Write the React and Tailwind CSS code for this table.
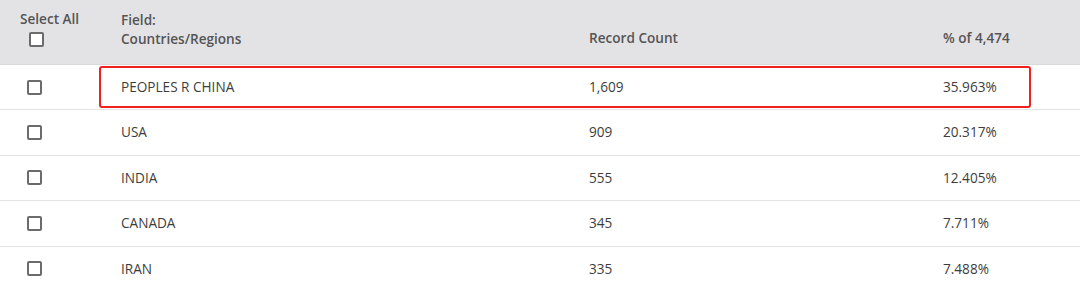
const rows = [
  { name: 'PEOPLES R CHINA', count: '1,609', pct: '35.963%', marked: true },
  { name: 'USA', count: '909', pct: '20.317%' },
  { name: 'INDIA', count: '555', pct: '12.405%' },
  { name: 'CANADA', count: '345', pct: '7.711%' },
  { name: 'IRAN', count: '335', pct: '7.488%' },
];

function Box() {
  return <span className="block h-[15px] w-[15px] rounded-[2px] border-2 border-[#6b6b6b] bg-white" />;
}

export default function App() {
  return (
    <div className="h-[287px] w-[1080px] overflow-hidden bg-white text-[13.6px] text-[#3d3d3d]" style={{ fontFamily: '"Source Sans Pro", "Open Sans", "Liberation Sans", sans-serif' }}>
      <div className="grid h-[65px] grid-cols-[99px_468px_354px_1fr] border-b border-[#d9d9dc] bg-[#e3e3e6] font-semibold text-[#555]">
        <div className="flex flex-col items-start pl-[20px] pt-[10px]">
          <span className="leading-[18px]">Select All</span>
          <span className="ml-[9px] mt-[4px]"><Box /></span>
        </div>
        <div className="flex flex-col pl-[22px] pt-[10px] leading-[19px]">
          <span>Field:</span>
          <span>Countries/Regions</span>
        </div>
        <div className="flex items-end pb-[16px] pl-[22px]">Record Count</div>
        <div className="flex items-end pb-[16px] pl-[22px]">% of 4,474</div>
      </div>
      {rows.map((r) => (
        <div key={r.name} className="relative grid h-[45.4px] grid-cols-[99px_468px_354px_1fr] items-center border-b border-[#e4e4e4]">
          <div className="pl-[27px]"><Box /></div>
          <div className="pl-[22px]">{r.name}</div>
          <div className="pl-[22px]">{r.count}</div>
          <div className="pl-[22px]">{r.pct}</div>
          {r.marked && (
            <div className="pointer-events-none absolute left-[99px] top-[1px] h-[42px] w-[932px] rounded-[3px] border-2 border-[#f02020]" />
          )}
        </div>
      ))}
    </div>
  );
}
